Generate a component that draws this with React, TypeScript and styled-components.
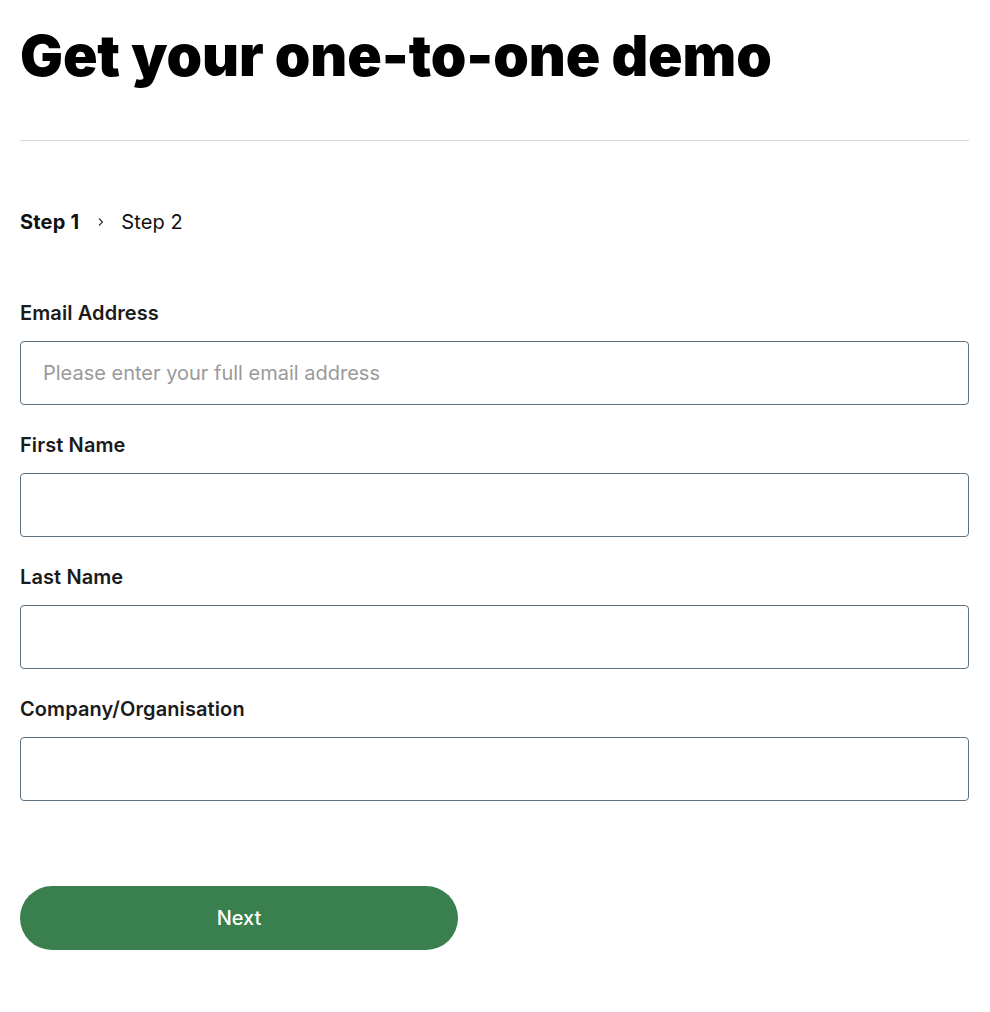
import styled, { createGlobalStyle } from "styled-components";

/* -------- Global -------- */
const GlobalStyle = createGlobalStyle`
  * { box-sizing: border-box; }
  body {
    margin: 0;
    background: #ffffff;
    font-family: Inter, "Noto Sans", "Liberation Sans", sans-serif;
    color: #1b1b1b;
  }
`;

/* -------- Styled Components -------- */
const Page = styled.main`
  width: 990px;
  padding: 16px 21px 40px 20px;
`;

const Title = styled.h1`
  margin: 0;
  font-family: Inter, "Noto Sans", sans-serif;
  font-size: 57px;
  font-weight: 900;
  line-height: 80px;
  letter-spacing: -0.1px;
  color: #000000;
`;

const Divider = styled.hr`
  margin: 44px 0 0 0;
  border: none;
  border-top: 1px solid #d3d8dc;
`;

const Steps = styled.nav`
  display: flex;
  align-items: center;
  gap: 13px;
  margin-top: 67px;
  font-size: 20px;
  line-height: 28px;
`;

const Step = styled.span<{ $active?: boolean }>`
  font-weight: ${(p) => (p.$active ? 700 : 400)};
  letter-spacing: ${(p) => (p.$active ? "0.2px" : "0.1px")};
  color: #111111;
`;

const Chevron = styled.span`
  display: inline-flex;
  width: 14px;
  justify-content: center;
  margin: 0 0 0 2px;
`;

const Form = styled.form`
  display: flex;
  flex-direction: column;
  gap: 28px;
  margin-top: 65px;
`;

const Field = styled.div`
  display: flex;
  flex-direction: column;
  gap: 16px;
`;

const Label = styled.label`
  font-size: 20px;
  line-height: 24px;
  font-weight: 600;
  letter-spacing: 0.1px;
  color: #1b1b1b;
`;

const Input = styled.input`
  width: 100%;
  height: 64px;
  padding: 0 22px;
  border: 1px solid #5e7282;
  border-radius: 4px;
  font-family: inherit;
  font-size: 20px;
  color: #1b1b1b;
  outline: none;

  &::placeholder {
    color: #9a9a9a;
  }
`;

const NextButton = styled.button`
  width: 438px;
  height: 64px;
  margin-top: 57px;
  border: none;
  border-radius: 32px;
  background-color: #3a7f4e;
  color: #ffffff;
  font-family: inherit;
  font-size: 20px;
  font-weight: 500;
  cursor: pointer;
`;

const fields = [
  { id: "email", label: "Email Address", placeholder: "Please enter your full email address" },
  { id: "first", label: "First Name", placeholder: "" },
  { id: "last", label: "Last Name", placeholder: "" },
  { id: "company", label: "Company/Organisation", placeholder: "" },
];

export default function App() {
  return (
    <>
      <GlobalStyle />
      <Page>
        <Title>Get your one-to-one demo</Title>
        <Divider />
        <Steps>
          <Step $active>Step 1</Step>
          <Chevron>
            <svg width="8" height="10" viewBox="0 0 8 10" fill="none">
              <path d="M2 1.5 L5.5 5 L2 8.5" stroke="#333" strokeWidth="1.2" />
            </svg>
          </Chevron>
          <Step>Step 2</Step>
        </Steps>
        <Form onSubmit={(e) => e.preventDefault()}>
          {fields.map((f) => (
            <Field key={f.id}>
              <Label htmlFor={f.id}>{f.label}</Label>
              <Input id={f.id} placeholder={f.placeholder} />
            </Field>
          ))}
          <NextButton type="submit">Next</NextButton>
        </Form>
      </Page>
    </>
  );
}
